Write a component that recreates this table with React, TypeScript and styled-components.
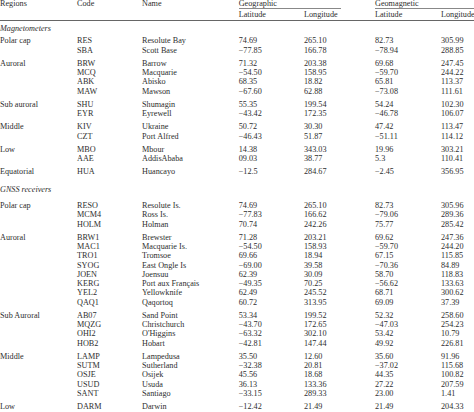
import React from 'react'
import styled, { createGlobalStyle } from 'styled-components'

type Station = [string, string, string, string, string, string]
type Group = { region: string; rows: Station[] }
type Section = { title: string; top: number; groups: Group[] }

const m = (v: string) => v.replace('-', '\u2212')

const sections: Section[] = [
  {
    title: 'Magnetometers',
    top: 2.5,
    groups: [
      {
        region: 'Polar cap',
        rows: [
          ['RES', 'Resolute Bay', '74.69', '265.10', '82.73', '305.99'],
          ['SBA', 'Scott Base', '-77.85', '166.78', '-78.94', '288.85'],
        ],
      },
      {
        region: 'Auroral',
        rows: [
          ['BRW', 'Barrow', '71.32', '203.38', '69.68', '247.45'],
          ['MCQ', 'Macquarie', '-54.50', '158.95', '-59.70', '244.22'],
          ['ABK', 'Abisko', '68.35', '18.82', '65.81', '113.37'],
          ['MAW', 'Mawson', '-67.60', '62.88', '-73.08', '111.61'],
        ],
      },
      {
        region: 'Sub auroral',
        rows: [
          ['SHU', 'Shumagin', '55.35', '199.54', '54.24', '102.30'],
          ['EYR', 'Eyrewell', '-43.42', '172.35', '-46.78', '106.07'],
        ],
      },
      {
        region: 'Middle',
        rows: [
          ['KIV', 'Ukraine', '50.72', '30.30', '47.42', '113.47'],
          ['CZT', 'Port Alfred', '-46.43', '51.87', '-51.11', '114.12'],
        ],
      },
      {
        region: 'Low',
        rows: [
          ['MBO', 'Mbour', '14.38', '343.03', '19.96', '303.21'],
          ['AAE', 'AddisAbaba', '09.03', '38.77', '5.3', '110.41'],
        ],
      },
      {
        region: 'Equatorial',
        rows: [['HUA', 'Huancayo', '-12.5', '284.67', '-2.45', '356.95']],
      },
    ],
  },
  {
    title: 'GNSS receivers',
    top: 8.4,
    groups: [
      {
        region: 'Polar cap',
        rows: [
          ['RESO', 'Resolute Is.', '74.69', '265.10', '82.73', '305.96'],
          ['MCM4', 'Ross Is.', '-77.83', '166.62', '-79.06', '289.36'],
          ['HOLM', 'Holman', '70.74', '242.26', '75.77', '285.42'],
        ],
      },
      {
        region: 'Auroral',
        rows: [
          ['BRW1', 'Brewster', '71.28', '203.21', '69.62', '247.36'],
          ['MAC1', 'Macquarie Is.', '-54.50', '158.93', '-59.70', '244.20'],
          ['TRO1', 'Tromsoe', '69.66', '18.94', '67.15', '115.85'],
          ['SYOG', 'East Ongle Is', '-69.00', '39.58', '-70.36', '84.89'],
          ['JOEN', 'Joensuu', '62.39', '30.09', '58.70', '118.83'],
          ['KERG', 'Port aux Français', '-49.35', '70.25', '-56.62', '133.63'],
          ['YEL2', 'Yellowknife', '62.49', '245.52', '68.71', '300.62'],
          ['QAQ1', 'Qaqortoq', '60.72', '313.95', '69.09', '37.39'],
        ],
      },
      {
        region: 'Sub Auroral',
        rows: [
          ['AB07', 'Sand Point', '53.34', '199.52', '52.32', '258.60'],
          ['MQZG', 'Christchurch', '-43.70', '172.65', '-47.03', '254.23'],
          ['OHI2', "O'Higgins", '-63.32', '302.10', '53.42', '10.79'],
          ['HOB2', 'Hobart', '-42.81', '147.44', '49.92', '226.81'],
        ],
      },
      {
        region: 'Middle',
        rows: [
          ['LAMP', 'Lampedusa', '35.50', '12.60', '35.60', '91.96'],
          ['SUTM', 'Sutherland', '-32.38', '20.81', '-37.02', '115.68'],
          ['OSJE', 'Osijek', '45.56', '18.68', '44.35', '100.82'],
          ['USUD', 'Usuda', '36.13', '133.36', '27.22', '207.59'],
          ['SANT', 'Santiago', '-33.15', '289.33', '23.00', '1.41'],
        ],
      },
      {
        region: 'Low',
        rows: [['DARM', 'Darwin', '-12.42', '21.49', '21.49', '204.33']],
      },
    ],
  },
]

const GlobalStyle = createGlobalStyle`
  html, body {
    margin: 0;
    padding: 0;
    background: #fff;
  }
  body {
    font-family: "Liberation Serif", "Times New Roman", serif;
    color: #2e2e2e;
  }
`

const COLS = '77px 65px 96.7px 65.3px 71px 66px 1fr'

const Table = styled.div`
  width: 474px;
  height: 412px;
  overflow: hidden;
  font-size: 8.2px;
`

const Header = styled.div`
  margin-top: -1px;
  padding-bottom: 1px;
  border-bottom: 1.2px solid #666;
`

const Row = styled.div<{ $top?: number }>`
  display: grid;
  grid-template-columns: ${COLS};
  height: 9.25px;
  line-height: 9.25px;
  margin-top: ${(p) => p.$top ?? 0}px;
  white-space: nowrap;
`

const Cell = styled.div`
  overflow: visible;
`

const SpanHead = styled.div<{ $trim?: number }>`
  grid-column: span 2;
  margin-right: ${(p) => p.$trim ?? 0}px;
  border-bottom: 1px solid #888;
`

const SectionTitle = styled.div`
  grid-column: 1 / -1;
  font-style: italic;
`

export default function App() {
  return (
    <>
      <GlobalStyle />
      <Table>
        <Header>
          <Row>
            <Cell>Regions</Cell>
            <Cell>Code</Cell>
            <Cell>Name</Cell>
            <SpanHead $trim={34}>Geographic</SpanHead>
            <SpanHead>Geomagnetic</SpanHead>
          </Row>
          <Row $top={1.8}>
            <Cell />
            <Cell />
            <Cell />
            <Cell>Latitude</Cell>
            <Cell>Longitude</Cell>
            <Cell>Latitude</Cell>
            <Cell>Longitude</Cell>
          </Row>
        </Header>
        {sections.map((s, si) => (
          <React.Fragment key={s.title}>
            <Row $top={s.top}>
              <SectionTitle>{s.title}</SectionTitle>
            </Row>
            {s.groups.map((g, gi) =>
              g.rows.map((r, ri) => (
                <Row
                  key={`${si}-${gi}-${ri}`}
                  $top={ri === 0 ? (gi === 0 ? (si === 0 ? 3.3 : 6.8) : 4) : 0}
                >
                  <Cell>{ri === 0 ? g.region : ''}</Cell>
                  <Cell>{r[0]}</Cell>
                  <Cell>{r[1]}</Cell>
                  <Cell>{m(r[2])}</Cell>
                  <Cell>{m(r[3])}</Cell>
                  <Cell>{m(r[4])}</Cell>
                  <Cell>{m(r[5])}</Cell>
                </Row>
              ))
            )}
          </React.Fragment>
        ))}
      </Table>
    </>
  )
}
